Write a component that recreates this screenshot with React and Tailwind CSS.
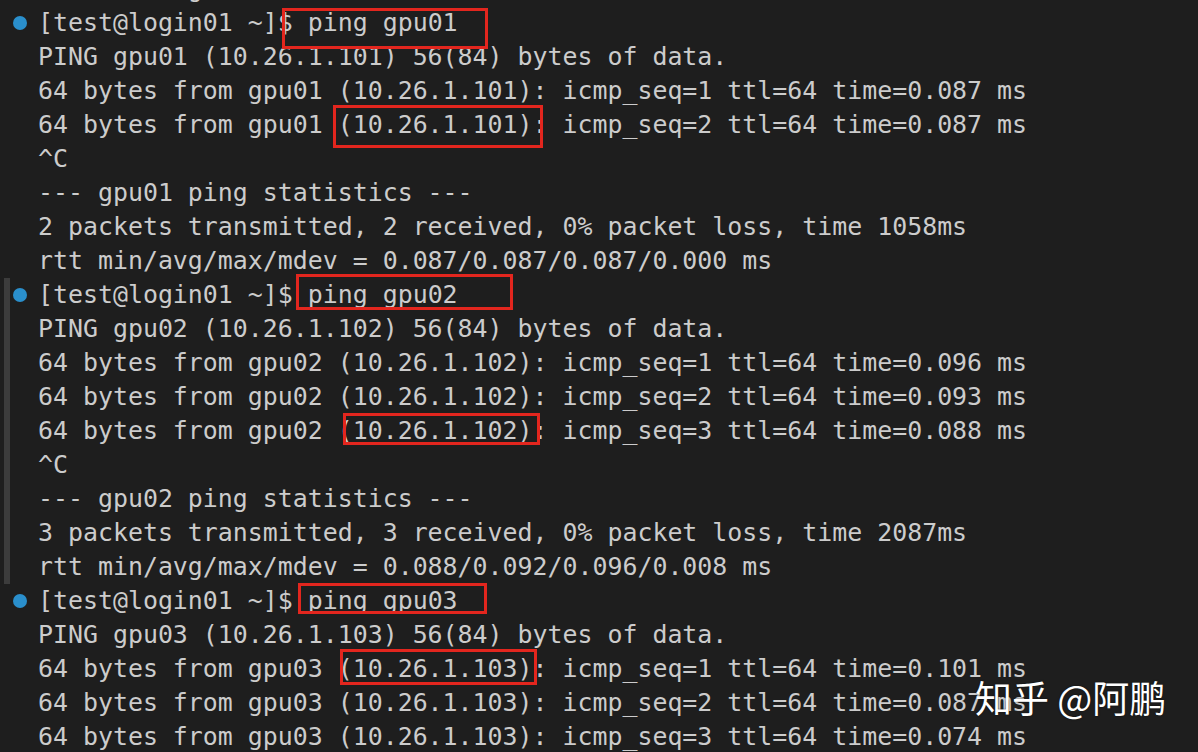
import React from "react";

const PROMPT = "[test@login01 ~]$ ";

const blocks = [
  {
    id: "prev",
    prompt: null,
    lines: ["rtt min/avg/max/mdev = 0.086/0.086/0.086/0.000 ms"],
  },
  {
    id: "gpu01",
    prompt: "ping gpu01",
    lines: [
      "PING gpu01 (10.26.1.101) 56(84) bytes of data.",
      "64 bytes from gpu01 (10.26.1.101): icmp_seq=1 ttl=64 time=0.087 ms",
      "64 bytes from gpu01 (10.26.1.101): icmp_seq=2 ttl=64 time=0.087 ms",
      "^C",
      "--- gpu01 ping statistics ---",
      "2 packets transmitted, 2 received, 0% packet loss, time 1058ms",
      "rtt min/avg/max/mdev = 0.087/0.087/0.087/0.000 ms",
    ],
  },
  {
    id: "gpu02",
    prompt: "ping gpu02",
    active: true,
    lines: [
      "PING gpu02 (10.26.1.102) 56(84) bytes of data.",
      "64 bytes from gpu02 (10.26.1.102): icmp_seq=1 ttl=64 time=0.096 ms",
      "64 bytes from gpu02 (10.26.1.102): icmp_seq=2 ttl=64 time=0.093 ms",
      "64 bytes from gpu02 (10.26.1.102): icmp_seq=3 ttl=64 time=0.088 ms",
      "^C",
      "--- gpu02 ping statistics ---",
      "3 packets transmitted, 3 received, 0% packet loss, time 2087ms",
      "rtt min/avg/max/mdev = 0.088/0.092/0.096/0.008 ms",
    ],
  },
  {
    id: "gpu03",
    prompt: "ping gpu03",
    lines: [
      "PING gpu03 (10.26.1.103) 56(84) bytes of data.",
      "64 bytes from gpu03 (10.26.1.103): icmp_seq=1 ttl=64 time=0.101 ms",
      "64 bytes from gpu03 (10.26.1.103): icmp_seq=2 ttl=64 time=0.087 ms",
      "64 bytes from gpu03 (10.26.1.103): icmp_seq=3 ttl=64 time=0.074 ms",
    ],
  },
];

// red annotation boxes drawn over the screenshot
const marks = [
  "left-[282px] top-[8px] w-[206px] h-[41px]",
  "left-[333px] top-[105px] w-[210px] h-[43px]",
  "left-[296px] top-[274px] w-[217px] h-[36px]",
  "left-[343px] top-[413px] w-[197px] h-[32px]",
  "left-[298px] top-[583px] w-[189px] h-[31px]",
  "left-[340px] top-[649px] w-[197px] h-[36px]",
];

const Line = ({ dot, children }) => (
  <div className="flex h-[34px] items-center">
    <div className="w-[28px] flex items-center">
      {dot && <span className="ml-[3px] w-[14px] h-[14px] rounded-full bg-[#2a8fcc]" />}
    </div>
    <span className="whitespace-pre">{children}</span>
  </div>
);

export default function App() {
  return (
    <div
      className="relative w-[1198px] h-[752px] overflow-hidden bg-[#1e1e1e] text-[#cccccc] text-[24.9px] leading-[34px]"
      style={{ fontFamily: '"DejaVu Sans Mono", "Liberation Mono", monospace' }}
    >
      <div className="flex flex-col mt-[-28px]">
        {blocks.map((b) => (
          <div key={b.id} className="flex">
            <div className="w-[10px] pl-[4px] flex">
              {b.active && <div className="w-[6px] bg-[#3c3c3c]" />}
            </div>
            <div className="flex flex-col">
              {b.prompt && (
                <Line dot>
                  {PROMPT}
                  {b.prompt}
                </Line>
              )}
              {b.lines.map((l, i) => (
                <Line key={i}>{l}</Line>
              ))}
            </div>
          </div>
        ))}
      </div>

      {marks.map((m, i) => (
        <div key={i} className={`absolute border-[3px] border-[#e3261e] ${m}`} />
      ))}

      <div
        className="absolute left-[975px] top-[673px] text-white text-[37px] leading-[48px] whitespace-pre [text-shadow:0_0_2px_rgba(0,0,0,0.6)]"
        style={{ fontFamily: '"Noto Sans CJK SC", "Noto Sans", sans-serif' }}
      >
        知乎 @阿鹏
      </div>
    </div>
  );
}
